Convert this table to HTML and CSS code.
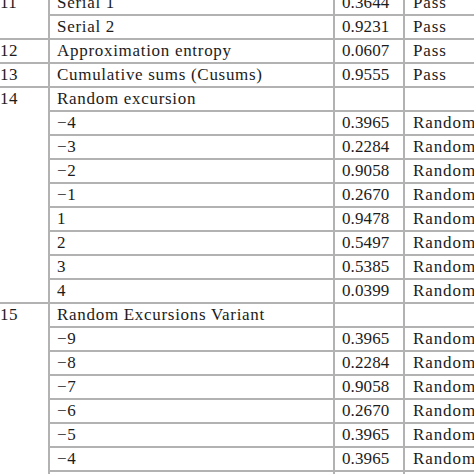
FILE: index.html
```html
<!DOCTYPE html>
<html>
<head>
<meta charset="utf-8">
<link rel="stylesheet" href="styles.css">
</head>
<body>
<div class="frame">
<table class="results">
<colgroup><col class="c-no"><col class="c-test"><col class="c-p"><col class="c-res"></colgroup>
<tbody>
<tr><td class="no" rowspan="2">11</td><td class="test">Serial 1</td><td class="p">0.3644</td><td class="res">Pass</td></tr>
<tr><td class="test">Serial 2</td><td class="p">0.9231</td><td class="res">Pass</td></tr>
<tr><td class="no">12</td><td class="test">Approximation entropy</td><td class="p">0.0607</td><td class="res">Pass</td></tr>
<tr><td class="no">13</td><td class="test">Cumulative sums (Cusums)</td><td class="p">0.9555</td><td class="res">Pass</td></tr>
<tr><td class="no" rowspan="9">14</td><td class="test">Random excursion</td><td class="p"></td><td class="res"></td></tr>
<tr><td class="test">−4</td><td class="p">0.3965</td><td class="res">Random</td></tr>
<tr><td class="test">−3</td><td class="p">0.2284</td><td class="res">Random</td></tr>
<tr><td class="test">−2</td><td class="p">0.9058</td><td class="res">Random</td></tr>
<tr><td class="test">−1</td><td class="p">0.2670</td><td class="res">Random</td></tr>
<tr><td class="test">1</td><td class="p">0.9478</td><td class="res">Random</td></tr>
<tr><td class="test">2</td><td class="p">0.5497</td><td class="res">Random</td></tr>
<tr><td class="test">3</td><td class="p">0.5385</td><td class="res">Random</td></tr>
<tr><td class="test">4</td><td class="p">0.0399</td><td class="res">Random</td></tr>
<tr><td class="no" rowspan="9">15</td><td class="test">Random Excursions Variant</td><td class="p"></td><td class="res"></td></tr>
<tr><td class="test">−9</td><td class="p">0.3965</td><td class="res">Random</td></tr>
<tr><td class="test">−8</td><td class="p">0.2284</td><td class="res">Random</td></tr>
<tr><td class="test">−7</td><td class="p">0.9058</td><td class="res">Random</td></tr>
<tr><td class="test">−6</td><td class="p">0.2670</td><td class="res">Random</td></tr>
<tr><td class="test">−5</td><td class="p">0.3965</td><td class="res">Random</td></tr>
<tr><td class="test">−4</td><td class="p">0.3965</td><td class="res">Random</td></tr>
<tr><td class="test">−3</td><td class="p">0.2284</td><td class="res">Random</td></tr>
<tr><td class="test">−2</td><td class="p">0.9058</td><td class="res">Random</td></tr>
</tbody>
</table>
</div>
</body>
</html>
```
FILE: styles.css
```css
html, body {
  margin: 0;
  padding: 0;
  background: #fff;
  overflow: hidden;
}
.frame {
  width: 474px;
  height: 474px;
  overflow: hidden;
}
.results {
  border-collapse: collapse;
  table-layout: fixed;
  width: 524px;
  margin-top: -10px;
  font-family: "Liberation Serif", "Times New Roman", serif;
  font-size: 17px;
  color: #1c1c1c;
}
.c-no { width: 49px; }
.c-test { width: 285px; }
.c-p { width: 70px; }
.c-res { width: 120px; }
.results td {
  height: 24px;
  padding: 0 0 0 7px;
  border: 2px solid #b2b2b2;
  white-space: nowrap;
  overflow: hidden;
  line-height: 20px;
  vertical-align: middle;
  box-sizing: border-box;
}
.results td.no {
  border-left: none;
  padding-left: 0;
  vertical-align: top;
  padding-top: 1px;
  letter-spacing: 0.4px;
}
.results td.test {
  letter-spacing: 0.7px;
}
.results td.p {
  letter-spacing: 0.1px;
}
.results td.res {
  padding-left: 8px;
  letter-spacing: 0.9px;
}
```
